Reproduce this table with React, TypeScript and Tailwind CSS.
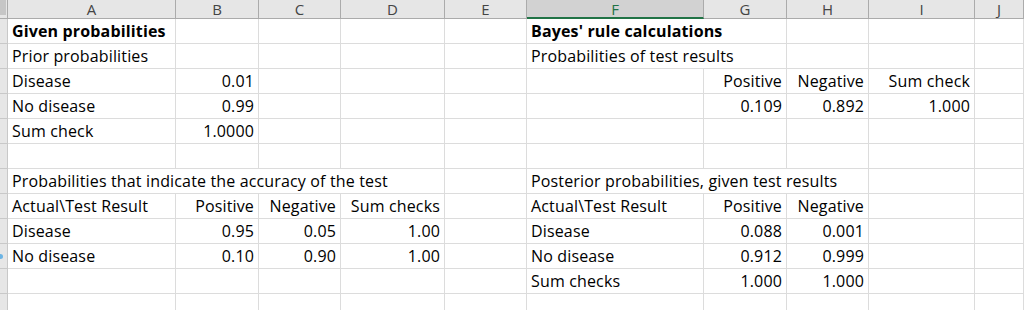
import React from "react";

type Cell = { c: number; t: string; span?: number; b?: boolean; r?: boolean };

const cols = ["A", "B", "C", "D", "E", "F", "G", "H", "I", "J"];

const rows: Cell[][] = [
  [
    { c: 0, t: "Given probabilities", b: true },
    { c: 5, t: "Bayes' rule calculations", b: true, span: 2 },
  ],
  [
    { c: 0, t: "Prior probabilities" },
    { c: 5, t: "Probabilities of test results", span: 2 },
  ],
  [
    { c: 0, t: "Disease" },
    { c: 1, t: "0.01", r: true },
    { c: 6, t: "Positive", r: true },
    { c: 7, t: "Negative", r: true },
    { c: 8, t: "Sum check", r: true },
  ],
  [
    { c: 0, t: "No disease" },
    { c: 1, t: "0.99", r: true },
    { c: 6, t: "0.109", r: true },
    { c: 7, t: "0.892", r: true },
    { c: 8, t: "1.000", r: true },
  ],
  [
    { c: 0, t: "Sum check" },
    { c: 1, t: "1.0000", r: true },
  ],
  [],
  [
    { c: 0, t: "Probabilities that indicate the accuracy of the test", span: 4 },
    { c: 5, t: "Posterior probabilities, given test results", span: 3 },
  ],
  [
    { c: 0, t: "Actual\\Test Result" },
    { c: 1, t: "Positive", r: true },
    { c: 2, t: "Negative", r: true },
    { c: 3, t: "Sum checks", r: true },
    { c: 5, t: "Actual\\Test Result" },
    { c: 6, t: "Positive", r: true },
    { c: 7, t: "Negative", r: true },
  ],
  [
    { c: 0, t: "Disease" },
    { c: 1, t: "0.95", r: true },
    { c: 2, t: "0.05", r: true },
    { c: 3, t: "1.00", r: true },
    { c: 5, t: "Disease" },
    { c: 6, t: "0.088", r: true },
    { c: 7, t: "0.001", r: true },
  ],
  [
    { c: 0, t: "No disease" },
    { c: 1, t: "0.10", r: true },
    { c: 2, t: "0.90", r: true },
    { c: 3, t: "1.00", r: true },
    { c: 5, t: "No disease" },
    { c: 6, t: "0.912", r: true },
    { c: 7, t: "0.999", r: true },
  ],
  [
    { c: 5, t: "Sum checks" },
    { c: 6, t: "1.000", r: true },
    { c: 7, t: "1.000", r: true },
  ],
  [],
];

const spanClass: Record<number, string> = {
  1: "col-span-1",
  2: "col-span-2",
  3: "col-span-3",
  4: "col-span-4",
};

function Row({ cells, idx }: { cells: Cell[]; idx: number }) {
  const out: React.ReactNode[] = [];
  out.push(
    <div key="stub" className="bg-[#e6e6e6] border-r border-b border-[#c8c8c8] flex items-center">
      {idx === 9 && <span className="w-[3px] h-[5px] rounded-r-full bg-[#6cb4e4]" />}
    </div>
  );
  let c = 0;
  while (c < 10) {
    const cell = cells.find((x) => x.c === c);
    const span = cell?.span ?? 1;
    out.push(
      <div
        key={c}
        className={`${spanClass[span]} border-r border-b border-[#dcdcdc] flex items-end pb-[1px] whitespace-nowrap overflow-hidden ${
          cell?.r ? "justify-end pr-[4px]" : "pl-[4px]"
        } ${cell?.b ? "font-bold" : ""}`}
      >
        {cell?.t}
      </div>
    );
    c += span;
  }
  return <>{out}</>;
}

export default function App() {
  return (
    <div className="h-[310px] w-[1024px] overflow-hidden bg-white text-black font-['Open_Sans',sans-serif] text-[16px] leading-[21px] tracking-[0.15px]">
      <div className="grid grid-cols-[8px_168px_83px_82px_104px_82px_177px_83px_82px_106px_1fr] grid-rows-[19px_repeat(12,25px)]">
        {/* corner */}
        <div className="bg-[#e6e6e6] border-r border-b border-[#ababab] flex items-start">
          <div className="w-[6px] h-[15px] bg-[#c6c6c6]" />
        </div>
        {cols.map((l) =>
          l === "F" ? (
            <div
              key={l}
              className="bg-[#d2d2d2] border-r border-[#ababab] border-b-2 border-b-[#217346] flex items-center justify-center text-[#217346] text-[15px] leading-[16px] tracking-normal"
            >
              {l}
            </div>
          ) : (
            <div
              key={l}
              className="bg-[#e6e6e6] border-r border-b border-[#ababab] flex items-center justify-center text-[#444] text-[15px] leading-[16px] tracking-normal"
            >
              {l}
            </div>
          )
        )}
        {rows.map((r, i) => (
          <Row key={i} cells={r} idx={i} />
        ))}
      </div>
    </div>
  );
}
